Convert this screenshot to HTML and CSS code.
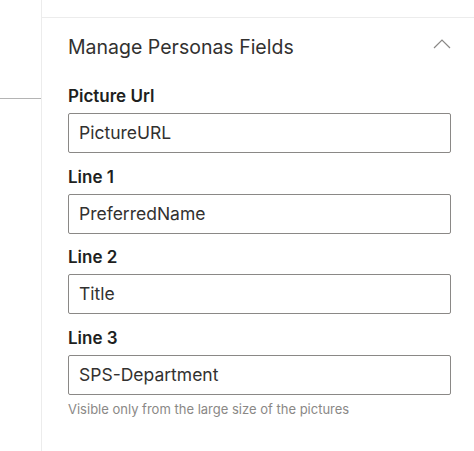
FILE: index.html
```html
<!DOCTYPE html>
<html>
<head>
<meta charset="utf-8">
<link rel="stylesheet" href="styles.css">
</head>
<body>
<div class="page">
  <div class="side">
    <div class="side-rule"></div>
  </div>
  <div class="pane">
    <div class="pane-top"></div>
    <div class="group">
      <div class="group-header">
        <span class="group-title">Manage Personas Fields</span>
        <svg class="chevron" width="18" height="10" viewBox="0 0 18 10"><path d="M1 9 L9 1 L17 9" fill="none" stroke="#8a8886" stroke-width="1.2"/></svg>
      </div>
      <div class="field">
        <label class="label">Picture Url</label>
        <div class="input">PictureURL</div>
      </div>
      <div class="field">
        <label class="label">Line 1</label>
        <div class="input">PreferredName</div>
      </div>
      <div class="field">
        <label class="label">Line 2</label>
        <div class="input">Title</div>
      </div>
      <div class="field">
        <label class="label">Line 3</label>
        <div class="input">SPS-Department</div>
        <div class="helper">Visible only from the large size of the pictures</div>
      </div>
    </div>
  </div>
</div>
</body>
</html>
```

FILE: styles.css
```css
html, body {
  margin: 0;
  padding: 0;
  background: #ffffff;
}
body {
  font-family: Inter, "Noto Sans", sans-serif;
  color: #323130;
}
.page {
  display: flex;
  height: 451px;
  overflow: hidden;
}
.side {
  width: 41px;
  flex: none;
  border-right: 1px solid #ececec;
}
.side-rule {
  height: 98px;
  border-bottom: 1px solid #b4b4b4;
}
.pane {
  flex: 1;
  min-width: 0;
}
.pane-top {
  height: 17px;
  border-bottom: 1px solid #ececec;
}
.group {
  padding: 0 23px 0 26px;
}
.group-header {
  display: flex;
  align-items: flex-start;
  justify-content: space-between;
  padding: 15px 0 20px;
}
.group-title {
  font-size: 19.5px;
  line-height: 28px;
  font-weight: 400;
  color: #323130;
}
.chevron {
  display: block;
  margin-top: 6px;
}
.field {
  display: flex;
  flex-direction: column;
  margin-bottom: 8.5px;
}
.label {
  font-size: 17px;
  font-weight: 600;
  color: #201f1e;
  line-height: 22px;
  padding: 4px 0 6px;
}
.input {
  height: 38px;
  border: 1px solid #8a8886;
  border-radius: 2px;
  padding: 0 10px;
  font-size: 17.5px;
  line-height: 38px;
  color: #323130;
}
.helper {
  font-size: 13px;
  color: #8a8886;
  padding-top: 6px;
}
```
